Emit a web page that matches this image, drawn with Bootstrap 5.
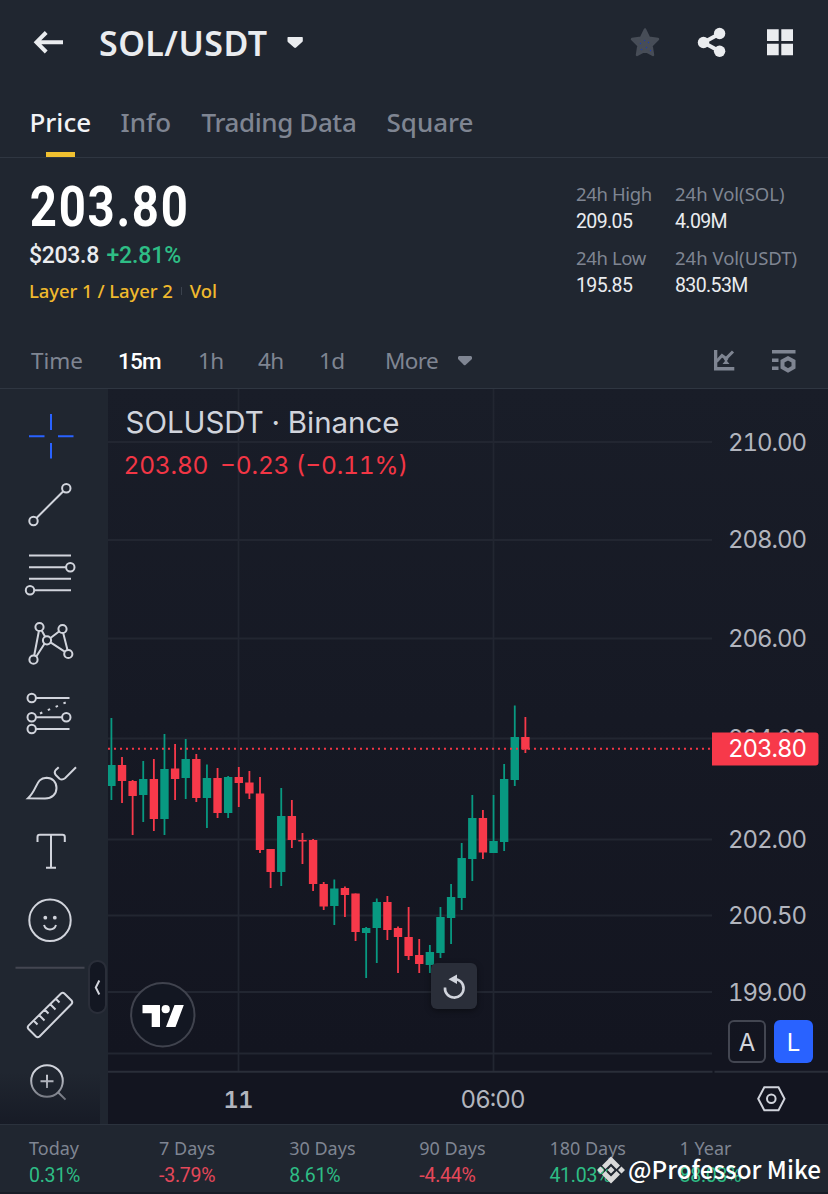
<!DOCTYPE html>
<html lang="en">
<head>
<meta charset="utf-8">
<meta name="viewport" content="width=device-width, initial-scale=1">
<title>SOL/USDT</title>
<link href="https://cdn.jsdelivr.net/npm/bootstrap@5.3.0/dist/css/bootstrap.min.css" rel="stylesheet">
<style>
  body { background:#202630; color:#eaecef; font-family:"Noto Sans","Open Sans",sans-serif; width:828px; height:1194px; overflow:hidden; line-height:1; }
  svg { display:block; flex:none; }
  .muted { color:#7f8592; }
  .up { color:#2ebd85; } .down { color:#e5485a; }
  .din { font-family:Roboto,"Liberation Sans",sans-serif; white-space:nowrap; }
  .topbar { height:85px; padding-left:33px; }
  .pair { font-size:34px; font-weight:600; width:188px; margin-left:36px; letter-spacing:.45px; line-height:40px; }
  .tabs { height:73px; padding-left:30px; border-bottom:1px solid #2f3641; font-size:26px; font-weight:500; }
  .tabs span { position:relative; left:-.5px; line-height:75px; white-space:nowrap; }
  .tabs .on { color:#f2f3f6; }
  .tabs .on::after { content:""; position:absolute; left:16px; top:67px; width:29px; height:5px; background:#f0c030; }
  .ticker { height:176px; padding:19px 29px 0 29px; }
  .big { font-size:55px; font-weight:700; color:#fff; line-height:60px; transform:scaleX(.86); transform-origin:0 0; letter-spacing:2px; height:60px; padding-left:1px; }
  .second { font-size:23px; font-weight:500; line-height:37px; height:36px; letter-spacing:-.3px; }
  .second .up { margin-left:2px; letter-spacing:-.1px; }
  .tags { font-size:18.5px; font-weight:500; color:#f0b92d; line-height:35px; letter-spacing:-.06px; }
  .tags i { width:1px; height:8px; background:#3b424d; }
  .stats { display:grid; grid-template-columns:99px 124px; align-content:start; font-size:18.5px; line-height:27px; row-gap:9.500px; padding-top:3px; white-space:nowrap; }
  .stats .din { font-size:19.5px; letter-spacing:-.6px; color:#eaecef; line-height:30px; height:27px; }
  .stats .tight { letter-spacing:-.35px; }
  .frames { height:55px; border-bottom:1px solid #2f3641; padding-left:31px; font-size:22.500px; }
  .frames span { line-height:54px; white-space:nowrap; }
  .frames .din { letter-spacing:-.8px; line-height:56px; }
  .chart { height:735px; }
  .tools { width:108px; }
  .tools svg { stroke:#d1d4dc; stroke-width:2; fill:none; }
  .tools .fade-end { position:absolute; left:0; bottom:0; width:100px; height:52px; background:linear-gradient(#20263000,#171b26); }
  .fold { position:absolute; left:90px; top:573px; width:15px; height:50px; border-radius:7px; background:#131722; outline:2px solid #2a2e39; z-index:2; }
  .plot { width:720px; background:linear-gradient(#191d28,#131520 90%); font-family:Inter,sans-serif; font-variant-numeric:tabular-nums; }
  .float-btn { position:absolute; display:grid; place-items:center; border-radius:6px; font-size:24px; padding-top:2px; }
  .perf { height:70px; border-top:1px solid #2b323d; padding-left:29px; font-size:18px; box-shadow:inset 0 -2px #181c26; }
  .perf > div { width:130.1px; line-height:26px; padding-top:10px; white-space:nowrap; }
  .perf .din { font-size:19.500px; letter-spacing:-.25px; line-height:29px; }
  .author { position:absolute; left:597px; top:1155px; height:30px; color:#fff; font-family:"Noto Sans CJK SC",sans-serif; font-size:24.200px; font-weight:500; white-space:nowrap; }
</style>
</head>
<body>
<header>
  <div class="topbar d-flex align-items-center">
    <svg width="30" height="24" viewBox="33 30.500 30 24" fill="none" stroke="#eaecef" stroke-width="4"><path d="M63 41.7H37M46.2 32 36.5 41.7 46.2 51.5"/></svg>
    <div class="pair">SOL/USDT</div>
    <svg width="18" height="12" viewBox="0.500 0 18 12"><path d="M1.500 0h14q1 0 .8 1v3q0 .6-.6 1.100L9.600 10.600q-1 .8-2 0L1.600 5.200Q1 4.700 1 4V1q0-1 .5-1Z" fill="#eaecef"/></svg>
    <svg class="ms-auto" width="170" height="34" viewBox="628 26 170 34">
      <path d="M645 29.500l4 8.300 9 1.300-6.500 6.400 1.500 9.500-8-4.300-8 4.300 1.500-9.500-6.500-6.400 9-1.300Z" fill="#474d57" stroke="#474d57" stroke-width="2.500" stroke-linejoin="round"/>
      <g fill="#1d3cb0"><circle cx="644.500" cy="40.500" r=".7"/><circle cx="640.500" cy="43.500" r=".7"/><circle cx="648.500" cy="42.500" r=".7"/><circle cx="646.500" cy="47.500" r=".7"/><circle cx="650.500" cy="50.500" r=".7"/><circle cx="641.500" cy="49.500" r=".7"/></g>
      <path d="M720 33.500 703.500 42.500 720 51.500" fill="none" stroke="#eaecef" stroke-width="4"/>
      <g fill="#eaecef"><circle cx="719.600" cy="33.500" r="5.700"/><circle cx="703.500" cy="42.500" r="5.700"/><circle cx="719.600" cy="51.300" r="5.700"/>
      <path d="M767 29.300h11.700V41H767ZM781.300 29.300H793V41h-11.700ZM767 43.700h11.700V55.300H767ZM781.300 43.700H793V55.300h-11.700Z"/></g>
    </svg>
    <div style="width:30px"></div>
  </div>
  <nav class="tabs d-flex muted">
    <span class="on" style="width:91px">Price</span><span style="width:81px">Info</span><span style="width:185px;letter-spacing:-.4px">Trading Data</span><span>Square</span>
  </nav>
</header>
<section class="ticker d-flex justify-content-between">
  <div>
    <div class="big din">203.80</div>
    <div class="second din"><span>$203.8</span> <span class="up">+2.81%</span></div>
    <div class="tags d-flex align-items-center"><span>Layer 1 / Layer 2</span><i class="ms-2 me-2"></i><span>Vol</span></div>
  </div>
  <div class="stats">
    <div class="muted tight">24h High<div class="din">209.05</div></div><div class="muted">24h Vol(SOL)<div class="din">4.09M</div></div>
    <div class="muted tight">24h Low<div class="din">195.85</div></div><div class="muted">24h Vol(USDT)<div class="din">830.53M</div></div>
  </div>
</section>
<div class="frames d-flex align-items-center muted">
  <span style="width:87px">Time</span><span class="din text-white fw-medium" style="width:80px">15m</span><span style="width:60px;letter-spacing:-.5px">1h</span><span style="width:61px;letter-spacing:-.5px">4h</span><span style="width:66px;letter-spacing:-.5px">1d</span><span style="width:73px;letter-spacing:-.6px">More</span>
  <svg width="14" height="10" viewBox="0 0 14 10"><path d="M1 0h12l1 1v2L7.500 9q-.8.600-1.600 0L0 3V1Z" fill="#7f8592"/></svg>
  <svg class="ms-auto" style="margin-right:28px" width="90" height="24" viewBox="710 349 90 24" fill="#7f8592">
    <path d="M714 350h3.300v17H734.300v3.500H714Z"/><path d="M716.500 361.500 722 355.500 726 358.500 733 351.500" fill="none" stroke="#7f8592" stroke-width="3"/><path d="M722.500 364h7l-2.500-3 1.500-2.500h-5l1.500 2.500Z"/>
    <path d="M772 350h23.500v3.500H772ZM772 358.500h6.500v3.500H772ZM772 366.500h6.500v3.500H772Z"/><path d="M788 358.300 793.500 361.300v6L788 370.500 782.500 367.300v-6Z" fill="none" stroke="#7f8592" stroke-width="4"/>
  </svg>
</div>
<main class="chart d-flex">
  <aside class="tools position-relative d-flex flex-column">
    <svg width="100" height="81" viewBox="0 389 100 81"><path d="M51 414v16M51 443v15.500M29 436.300h15.500M58 436.300h15.500" stroke="#2962ff" stroke-width="2"/></svg>
    <svg width="100" height="70" viewBox="0 470 100 70"><circle cx="66.300" cy="488.200" r="4.200"/><circle cx="33.500" cy="521" r="4.200"/><path d="M63.300 491.200 36.500 518"/></svg>
    <svg width="100" height="70" viewBox="0 540 100 70"><path d="M29 555.500H71M29 567.300H66M29 578.800H71M34 590.300H71"/><circle cx="70.300" cy="567.300" r="4.200"/><circle cx="30" cy="590.300" r="4.200"/></svg>
    <svg width="100" height="70" viewBox="0 610 100 70"><path d="M38.900 631 34.200 655.500M41.700 630.500 45 636.500M36.300 656.500 44.500 643.700M50.500 638 59 631.500M50.500 642.300 64.700 651.700M63.200 633 67.500 650"/><circle cx="39.500" cy="627" r="4.100"/><circle cx="62.500" cy="629" r="4.100"/><circle cx="47" cy="640.300" r="4.100"/><circle cx="33.500" cy="659.700" r="4.100"/><circle cx="68.300" cy="654" r="4.100"/></svg>
    <svg width="100" height="68" viewBox="0 680 100 68"><path d="M36 698H69.500M36 717.300H62M36 729H69.500"/><path d="M40 713.500 68 701.500" stroke-dasharray="2.500 6"/><circle cx="31.700" cy="698" r="4.200"/><circle cx="31.700" cy="717.300" r="4.200"/><circle cx="66.300" cy="717.300" r="4.200"/><circle cx="31.700" cy="729" r="4.200"/></svg>
    <svg width="100" height="70" viewBox="0 748 100 70"><path d="M28 798.300C38 789 35.500 778 46.500 777.700 52.500 777.700 56.500 782 56.500 788 56.500 794 52 798.500 45 798.500ZM58.700 767.200 56 769.700Q53.500 772.500 56 775.200L59.500 778.700Q62 780.500 65 778.300L76 767.200"/></svg>
    <svg width="100" height="68" viewBox="0 818 100 68"><path d="M37.500 842v-5q0-2.300 2.300-2.300h22.700q2.300 0 2.300 2.300v5M51 835v33M46 867.700H56"/></svg>
    <svg width="100" height="70" viewBox="0 886 100 70"><circle cx="50" cy="920.300" r="20.700"/><circle cx="45.300" cy="917.700" r="1.900" fill="#d1d4dc" stroke="none"/><circle cx="54.800" cy="917.700" r="1.900" fill="#d1d4dc" stroke="none"/><path d="M44 925Q45.500 929.500 50 929.500T56 925"/></svg>
    <svg width="100" height="24" viewBox="0 956 100 24"><path d="M15.500 967.700H84.500" stroke="#434651" stroke-width="2"/></svg>
    <svg width="100" height="70" viewBox="0 980 100 70"><path d="M61 993.500Q62.700 992 64.400 993.500L71.500 1000.500Q73 1002.300 71.500 1004L39.500 1036.500Q37.700 1038 36 1036.500L28.500 1029Q27 1027.300 28.500 1025.600ZM33.500 1020.500l4 4M39 1015l5.500 5.500M44.500 1009.500l4 4M50 1004l5.500 5.500M55.500 998.500l4 4"/></svg>
    <svg width="100" height="74" viewBox="0 1050 100 74"><circle cx="47" cy="1081" r="15.800"/><path d="M40.500 1081.300H53.500M47 1074.700V1088M58 1092.300 65.500 1099.600"/></svg>
    <div class="fade-end"></div>
    <div class="fold"><svg width="15" height="50" viewBox="89.500 961.500 15 50"><path d="M98.800 980 95.300 987 98.800 994"/></svg></div>
  </aside>
  <div class="plot position-relative">
    <svg width="720" height="735" viewBox="108 389 720 735">
      <path d="M108 442H712M108 540H712M108 638.500H712M108 738.500H712M108 839.500H712M108 915.500H712M108 992H712M108 1053.500H712M238.500 389V1071M493.500 389V1071" stroke="#222631" stroke-width="1.800"/>
      <path d="M108 1071.700H712.500M714.500 1071.700H828" stroke="#2a2e39" stroke-width="2"/>
      <g id="candles"></g>
      <path d="M108 748.800H712" stroke="#f23645" stroke-width="1.900" stroke-dasharray="2 4"/>
      <text x="125.500" y="432.500" font-size="29.500" fill="#d1d4dc" textLength="274">SOLUSDT · Binance</text>
      <g font-size="24.500" fill="#f23645"><text x="123.500" y="474" textLength="85">203.80</text><text x="220" y="474" textLength="188">−0.23 (−0.11%)</text></g>
      <g font-size="24" fill="#b2b5be">
        <text x="728" y="450.500" textLength="79">210.00</text><text x="728" y="548" textLength="79">208.00</text><text x="728" y="647" textLength="79">206.00</text><text x="728" y="747" textLength="79">204.00</text><text x="728" y="847.500" textLength="79">202.00</text><text x="728" y="924" textLength="79">200.50</text><text x="728" y="1000.500" textLength="79">199.00</text>
        <text x="223.500" y="1108" font-weight="600" font-size="23.500" textLength="30">11</text><text x="460.500" y="1108" textLength="65">06:00</text>
      </g>
      <path d="M712 732.500H815.500Q818.500 732.500 818.500 735.500V762.500Q818.500 765.500 815.500 765.500H712Z" fill="#f7394a"/>
      <text x="728" y="757.300" font-size="24" fill="#fff" textLength="79">203.80</text>
      <circle cx="162.800" cy="1014.700" r="31.700" fill="#131722" stroke="#40434e" stroke-width="2"/>
      <g fill="#fff"><path d="M142.500 1005H160V1027H151.700V1013.300H142.500ZM174.500 1005H183.800L175.500 1027H166Z"/><circle cx="165.700" cy="1009.200" r="4.100"/></g>
      <g fill="none" stroke="#d1d4dc" stroke-width="2"><path d="M758.200 1098.700 764.300 1087.300H778.500L784.500 1098.700 778.500 1110.300H764.300Z"/><circle cx="771.300" cy="1098.700" r="4.300"/></g>
    </svg>
    <div class="float-btn pt-0" style="left:323px;top:574px;width:46px;height:46px;background:#2a2e39;box-shadow:0 2px 6px #0006"><svg width="46" height="46" viewBox="431 963 46 46"><path d="M445 987.500A9.300 9.300 0 1 0 454.500 979" fill="none" stroke="#d1d4dc" stroke-width="2.600"/><path d="M448.500 979.300 457 974.500V984Z" fill="#d1d4dc"/></svg></div>
    <div class="float-btn" style="left:620px;top:631px;width:38px;height:43px;border:2px solid #434651;color:#d1d4dc">A</div>
    <div class="float-btn" style="left:666px;top:631px;width:39px;height:43px;background:#2962ff;color:#fff">L</div>
  </div>
</main>
<footer class="perf d-flex muted">
  <div>Today<div class="din up">0.31%</div></div><div>7 Days<div class="din down">-3.79%</div></div><div>30 Days<div class="din up">8.61%</div></div><div>90 Days<div class="din down">-4.44%</div></div><div>180 Days<div class="din up">41.03%</div></div><div>1 Year<div class="din up">88.03%</div></div>
</footer>
<div class="author d-flex align-items-center">
  <svg width="28" height="30" viewBox="597 1155 28 30" fill="#d9d9d9"><path d="M611 1156.500 620 1165.500 616.500 1169 611 1163.500 605.500 1169 602 1165.500ZM611 1183.500 620 1174.500 616.500 1171 611 1176.500 605.500 1171 602 1174.500ZM611 1166.500 614.500 1170 611 1173.500 607.500 1170ZM600.500 1166.500 604 1170 600.500 1173.500 597 1170ZM621.500 1166.500 625 1170 621.500 1173.500 618 1170Z"/></svg>
  <span style="margin:-1px 0 0 3px">@Professor Mike</span>
</div>
<script src="https://cdn.jsdelivr.net/npm/bootstrap@5.3.0/dist/js/bootstrap.bundle.min.js"></script>
<script>
  // high, body top, body bottom, low, rising
  const bars = [[718,765,786,800,1],[757,765,781,803,0],[780,781,796,835,0],[761,779,795,822,1],[759,779,819,831,0],[734,769,819,835,1],[744,768.5,779,800,0],[739,759,778,799,1],[754,759,798,802,0],[764.5,778,798,828,1],[768,778,813,818,0],[776,777,813,818,1],[767,777,783,807,0],[771,782.5,793.5,799,0],[777,793.5,850,853,0],[849,849,872,888,0],[788,816,872,886,1],[800,816,840,848,0],[833,840,841.5,864,0],[839,840,884,891,0],[882,884,906.5,910,0],[879.5,888.5,906,925,1],[886.5,888,895,917,0],[893.5,893.5,932,941,0],[927,928,933,978,1],[898.5,902,928,963,1],[896,902,930,940,0],[926.5,928,937,973,0],[907,937,956,960,0],[939,955,964,973,0],[945,952,965,973,1],[907,917,953,958,1],[884,897,918,944,1],[843,858,898,910,1],[795,818,859,881,1],[810,818,852.5,859,0],[795,841,853,853,1],[764,779,842,851,1],[705.5,737,780,786,1],[717,737,749.5,753,0]];
  document.getElementById('candles').innerHTML = bars.map(([h, t, b, l, up], i) => {
    const x = 111.4 + i * 10.615;
    return `<g fill="${up ? '#089981' : '#f7394a'}"><rect x="${x - .9}" y="${h}" width="1.8" height="${l - h}"/><rect x="${x - 4.2}" y="${t}" width="8.4" height="${b - t}"/></g>`;
  }).join('');
</script>
</body>
</html>
